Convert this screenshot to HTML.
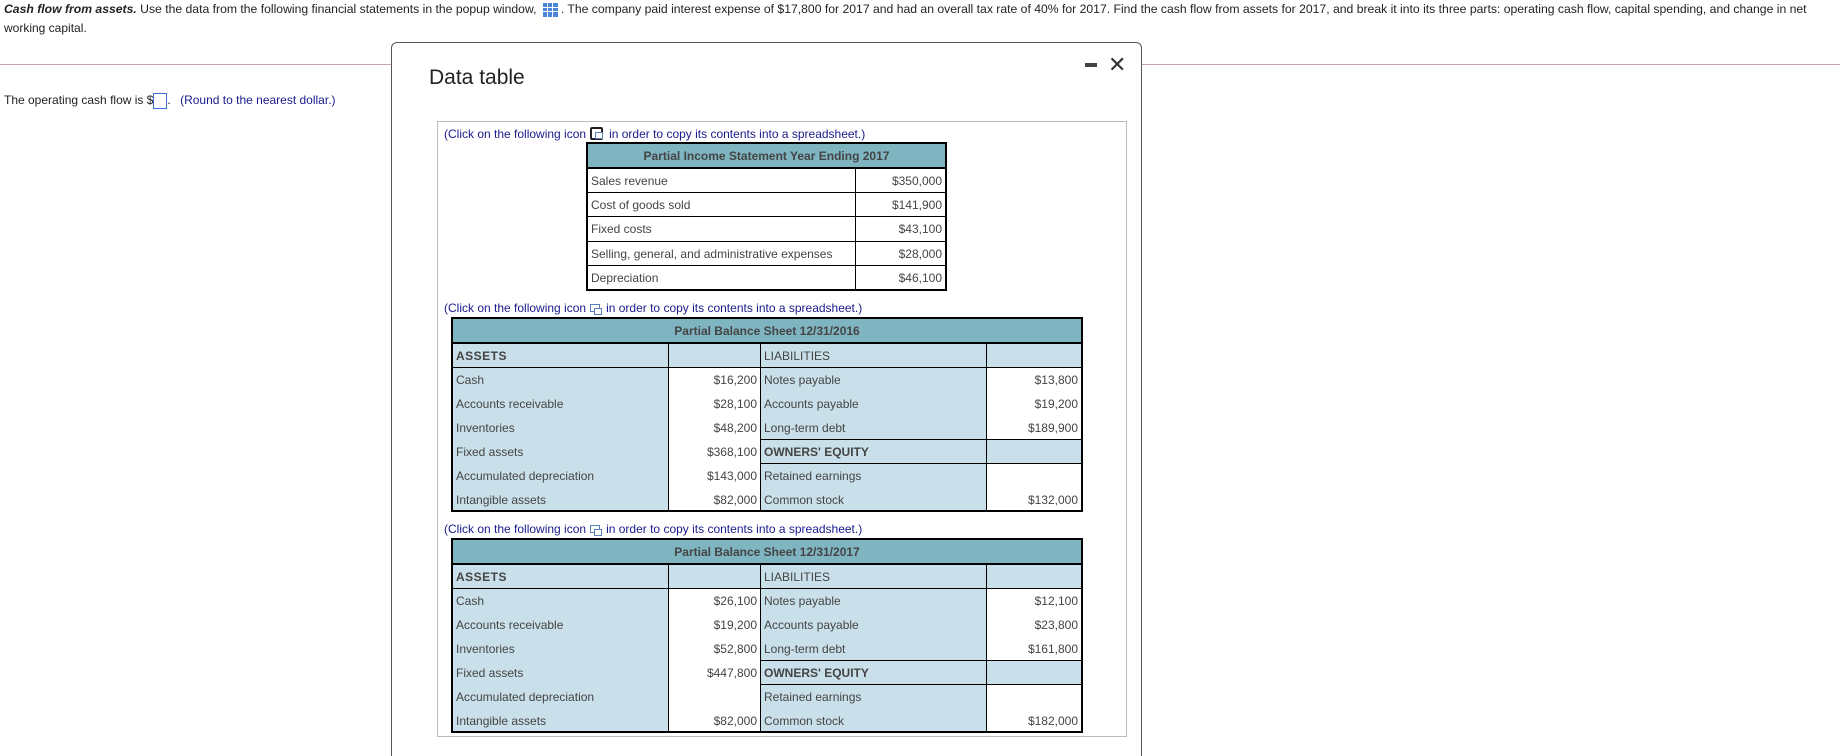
<!DOCTYPE html>
<html style="overflow:hidden;width:1840px;height:756px"><head><meta charset="utf-8"><style>
*{margin:0;padding:0;box-sizing:border-box}
body{width:1840px;height:756px;overflow:hidden;background:#fff;font-family:"Liberation Sans",Arial,sans-serif;font-size:12px;color:#222;position:relative}
.a{position:absolute;white-space:nowrap}
.t{position:absolute;border:2px solid #000;font-size:12px;color:#444}
.c{position:absolute;overflow:hidden;padding:0 3px;line-height:24px}
.h{background:#7fb5c1;color:#444;font-weight:bold;text-align:center;line-height:24px}
.lb{background:#c9e0ea}
.r{text-align:right}
.ico{display:inline-block;width:10px;height:8px;border:1px solid #5b7fb8;vertical-align:middle;margin:0 6px 0 4px;position:relative;top:-1px}
.ico:after{content:"";position:absolute;left:3px;top:3px;width:6px;height:5px;border:1px solid #5b7fb8;background:#fff}
</style></head><body>
<div class="a" style="left:4px;top:1px;line-height:16px;font-size:12.2px"><b><i>Cash flow from assets.</i></b> Use the data from the following financial statements in the popup window, <span style="display:inline-block;width:15px;height:14px;background:#4a86d8;vertical-align:middle;margin:0 3px;background-image:linear-gradient(90deg,transparent 4px,#fff 4px,#fff 5px,transparent 5px,transparent 9px,#fff 9px,#fff 10px,transparent 10px),linear-gradient(transparent 4px,#fff 4px,#fff 5px,transparent 5px,transparent 8px,#fff 8px,#fff 9px,transparent 9px)"></span>. The company paid interest expense of $17,800 for 2017 and had an overall tax rate of 40% for 2017. Find the cash flow from assets for 2017, and break it into its three parts: operating cash flow, capital spending, and change in net</div>
<div class="a" style="left:4px;top:20px;line-height:16px">working capital.</div>
<div class="a" style="left:0;top:64px;width:1840px;height:1px;background:#c9a0b3"></div>
<div class="a" style="left:4px;top:92px;line-height:16px">The operating cash flow is $<span style="display:inline-block;width:14px;height:16px;border:1px solid #3a6fd0;vertical-align:middle"></span>. <span style="color:#1a1a8c;margin-left:6px">(Round to the nearest dollar.)</span></div>

<div class="a" style="left:391px;top:42px;width:751px;height:740px;background:#fff;border:1px solid #555;border-bottom:none;border-radius:6px 6px 0 0"></div>
<div class="a" style="left:429px;top:66px;font-size:21px;color:#222">Data table</div>
<div class="a" style="left:1085px;top:63px;width:12px;height:4px;background:#444"></div>
<div class="a" style="left:1108px;top:52px;font-size:22px;color:#333">✕</div>
<div class="a" style="left:437px;top:121px;width:690px;height:616px;border:1px solid #bbb"></div>

<div class="a" style="left:444px;top:126px;color:#1a1a8c;line-height:16px">(Click on the following icon<span class="ico" style="border:2px solid #222;border-radius:2px;width:13px;height:13px"></span>in order to copy its contents into a spreadsheet.)</div>
<div class="t" style="left:586px;top:142px;width:361px;height:149px">
<div class="c h" style="left:0;top:0;width:357px;height:25px;border-bottom:2px solid #000">Partial Income Statement Year Ending 2017</div>
<div class="c" style="left:0;top:25px;width:268px;height:24px;border-right:1px solid #000;border-bottom:1px solid #000">Sales revenue</div><div class="c r" style="left:268px;top:25px;width:89px;height:24px;border-bottom:1px solid #000">$350,000</div>
<div class="c" style="left:0;top:49px;width:268px;height:24px;border-right:1px solid #000;border-bottom:1px solid #000">Cost of goods sold</div><div class="c r" style="left:268px;top:49px;width:89px;height:24px;border-bottom:1px solid #000">$141,900</div>
<div class="c" style="left:0;top:73px;width:268px;height:25px;border-right:1px solid #000;border-bottom:1px solid #000">Fixed costs</div><div class="c r" style="left:268px;top:73px;width:89px;height:25px;border-bottom:1px solid #000">$43,100</div>
<div class="c" style="left:0;top:98px;width:268px;height:24px;border-right:1px solid #000;border-bottom:1px solid #000">Selling, general, and administrative expenses</div><div class="c r" style="left:268px;top:98px;width:89px;height:24px;border-bottom:1px solid #000">$28,000</div>
<div class="c" style="left:0;top:122px;width:268px;height:23px;border-right:1px solid #000">Depreciation</div><div class="c r" style="left:268px;top:122px;width:89px;height:23px">$46,100</div>
</div>

<div class="a" style="left:444px;top:300px;color:#1a1a8c;line-height:16px">(Click on the following icon<span class="ico"></span>in order to copy its contents into a spreadsheet.)</div>
<div class="t" style="left:451px;top:317px;width:632px;height:195px">
<div class="c h" style="left:0;top:0;width:628px;height:25px;border-bottom:2px solid #000">Partial Balance Sheet 12/31/2016</div>
<div class="c lb" style="left:0;top:25px;width:216px;height:24px;border-right:1px solid #000;border-bottom:1px solid #000;font-weight:bold;letter-spacing:.5px">ASSETS</div>
<div class="c lb" style="left:216px;top:25px;width:92px;height:24px;border-right:1px solid #000;border-bottom:1px solid #000"></div>
<div class="c lb" style="left:308px;top:25px;width:226px;height:24px;border-right:1px solid #000;border-bottom:1px solid #000">LIABILITIES</div>
<div class="c lb" style="left:534px;top:25px;width:94px;height:24px;border-bottom:1px solid #000"></div>
<div class="c lb" style="left:0;top:49px;width:216px;height:142px;border-right:1px solid #000;line-height:24px">Cash<br>Accounts receivable<br>Inventories<br>Fixed assets<br>Accumulated depreciation<br>Intangible assets</div>
<div class="c r" style="left:216px;top:49px;width:92px;height:142px;border-right:1px solid #000">$16,200<br>$28,100<br>$48,200<br>$368,100<br>$143,000<br>$82,000</div>
<div class="c lb" style="left:308px;top:49px;width:226px;height:72px;border-right:1px solid #000;border-bottom:1px solid #000">Notes payable<br>Accounts payable<br>Long-term debt</div>
<div class="c r" style="left:534px;top:49px;width:94px;height:72px;border-bottom:1px solid #000">$13,800<br>$19,200<br>$189,900</div>
<div class="c lb" style="left:308px;top:121px;width:226px;height:24px;border-right:1px solid #000;border-bottom:1px solid #000;font-weight:bold">OWNERS' EQUITY</div>
<div class="c lb" style="left:534px;top:121px;width:94px;height:24px;border-bottom:1px solid #000"></div>
<div class="c lb" style="left:308px;top:145px;width:226px;height:46px;border-right:1px solid #000">Retained earnings<br>Common stock</div>
<div class="c r" style="left:534px;top:145px;width:94px;height:46px"><br>$132,000</div>
</div>

<div class="a" style="left:444px;top:521px;color:#1a1a8c;line-height:16px">(Click on the following icon<span class="ico"></span>in order to copy its contents into a spreadsheet.)</div>
<div class="t" style="left:451px;top:538px;width:632px;height:195px">
<div class="c h" style="left:0;top:0;width:628px;height:25px;border-bottom:2px solid #000">Partial Balance Sheet 12/31/2017</div>
<div class="c lb" style="left:0;top:25px;width:216px;height:24px;border-right:1px solid #000;border-bottom:1px solid #000;font-weight:bold;letter-spacing:.5px">ASSETS</div>
<div class="c lb" style="left:216px;top:25px;width:92px;height:24px;border-right:1px solid #000;border-bottom:1px solid #000"></div>
<div class="c lb" style="left:308px;top:25px;width:226px;height:24px;border-right:1px solid #000;border-bottom:1px solid #000">LIABILITIES</div>
<div class="c lb" style="left:534px;top:25px;width:94px;height:24px;border-bottom:1px solid #000"></div>
<div class="c lb" style="left:0;top:49px;width:216px;height:142px;border-right:1px solid #000">Cash<br>Accounts receivable<br>Inventories<br>Fixed assets<br>Accumulated depreciation<br>Intangible assets</div>
<div class="c r" style="left:216px;top:49px;width:92px;height:142px;border-right:1px solid #000">$26,100<br>$19,200<br>$52,800<br>$447,800<br><br>$82,000</div>
<div class="c lb" style="left:308px;top:49px;width:226px;height:72px;border-right:1px solid #000;border-bottom:1px solid #000">Notes payable<br>Accounts payable<br>Long-term debt</div>
<div class="c r" style="left:534px;top:49px;width:94px;height:72px;border-bottom:1px solid #000">$12,100<br>$23,800<br>$161,800</div>
<div class="c lb" style="left:308px;top:121px;width:226px;height:24px;border-right:1px solid #000;border-bottom:1px solid #000;font-weight:bold">OWNERS' EQUITY</div>
<div class="c lb" style="left:534px;top:121px;width:94px;height:24px;border-bottom:1px solid #000"></div>
<div class="c lb" style="left:308px;top:145px;width:226px;height:46px;border-right:1px solid #000">Retained earnings<br>Common stock</div>
<div class="c r" style="left:534px;top:145px;width:94px;height:46px"><br>$182,000</div>
</div>
</body></html>
